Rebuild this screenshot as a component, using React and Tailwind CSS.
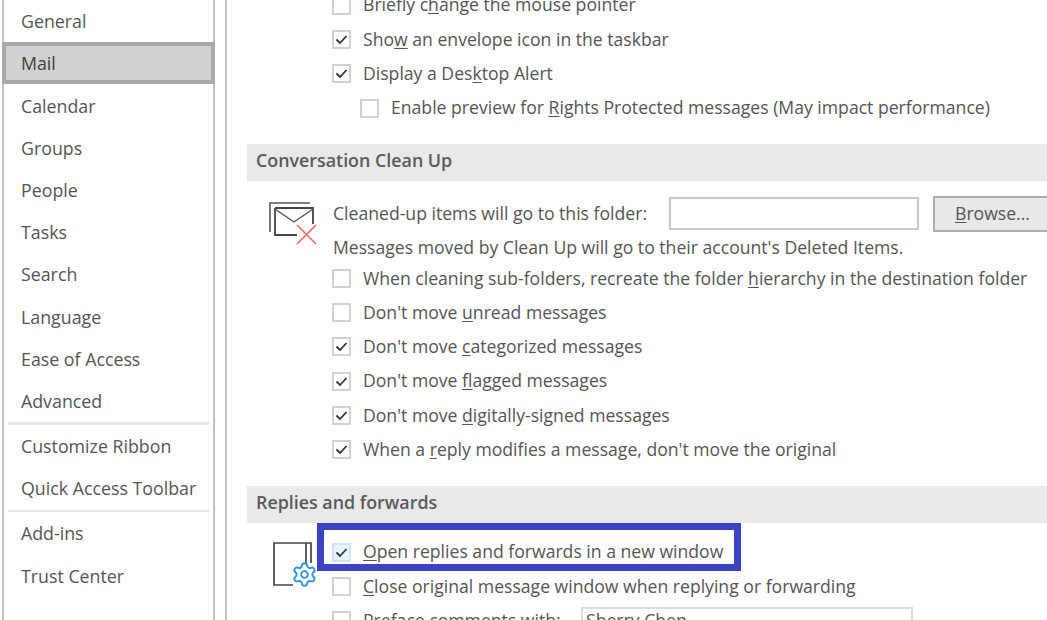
import React from "react";
import { Settings } from "lucide-react";

const font = { fontFamily: '"Open Sans", "Noto Sans", sans-serif' };

function U({ b, u, a }) {
  return (
    <span>
      {b}
      <span className="underline underline-offset-2 decoration-1">{u}</span>
      {a}
    </span>
  );
}

function Box({ checked, focus }) {
  return (
    <span
      className={`flex h-[19px] w-[19px] shrink-0 items-center justify-center border-2 ${
        focus ? "border-[#cfe3f5] bg-[#e8f3fc]" : "border-[#d2d2d2] bg-white"
      }`}
    >
      {checked && (
        <svg width="13" height="11" viewBox="0 0 13 11" fill="none">
          <path d="M1.5 5.5 L5 9 L11.5 2" stroke="#333" strokeWidth="1.8" />
        </svg>
      )}
    </span>
  );
}

function Row({ checked, children, indent = "ml-[85px]", focus }) {
  return (
    <div className={`flex h-[34.3px] items-center gap-[12px] ${indent}`}>
      <Box checked={checked} focus={focus} />
      <span className="whitespace-nowrap">{children}</span>
    </div>
  );
}

function Head({ children }) {
  return (
    <div className="flex h-[37px] items-center bg-[#e9e9e9] pb-[3px] pl-[9px] text-[17.85px] font-semibold text-[#5a5a5a]">
      {children}
    </div>
  );
}

const G1 = ["General", "Mail", "Calendar", "Groups", "People", "Tasks", "Search", "Language", "Ease of Access", "Advanced"];

function Nav({ label, active }) {
  return (
    <div
      className={`flex h-[42.2px] items-center pt-[2px] text-[17.8px] ${
        active
          ? "-mx-[2px] border-[4px] border-[#a9a9a9] bg-[#d2d1d0] pl-[15px] font-medium text-[#3f3f3f]"
          : "pl-[17px]"
      }`}
    >
      {label}
    </div>
  );
}

function CleanIcon() {
  return (
    <svg width="50" height="46" viewBox="0 0 50 46" fill="none">
      <path d="M1 30 V1 H41" stroke="#555" strokeWidth="1.6" />
      <path d="M6 6 H44 V22 M6 6 V33 H28" stroke="#444" strokeWidth="1.8" />
      <path d="M6 7 L25 20 L44 7" stroke="#555" strokeWidth="1.4" />
      <path d="M28 42 L47 23 M28 23 L47 42" stroke="#ee6a6a" strokeWidth="1.7" />
    </svg>
  );
}

function ReplyIcon() {
  return (
    <div className="relative h-[48px] w-[46px]">
      <svg width="40" height="44" viewBox="0 0 40 44" fill="none">
        <path d="M20 43 H1 V1 H38 V21 M33 1 V21" stroke="#444" strokeWidth="1.7" />
      </svg>
      <Settings className="absolute left-[18px] top-[19px]" size={27} color="#2f96dc" strokeWidth={1.7} />
    </div>
  );
}

export default function App() {
  return (
    <div
      className="relative flex h-[620px] w-[1047px] overflow-hidden bg-white text-[17.62px] leading-none text-[#555]"
      style={font}
    >
      <aside className="ml-[2px] h-[620px] w-[213px] shrink-0 border-x-2 border-[#c2c2c2]">
        {G1.map((l) => (
          <Nav key={l} label={l} active={l === "Mail"} />
        ))}
        <div className="mx-[4px] h-[3px] bg-[#e8e8e8]" />
        <Nav label="Customize Ribbon" />
        <Nav label="Quick Access Toolbar" />
        <div className="mx-[4px] mt-[1px] h-[2px] bg-[#e8e8e8]" />
        <Nav label="Add-ins" />
        <Nav label="Trust Center" />
      </aside>

      <div className="ml-[10px] h-[620px] w-[2px] shrink-0 bg-[#c2c2c2]" />

      <main className="ml-[20px] w-[800px] shrink-0 -mt-[12px]">
        <Row><U b="Briefly c" u="h" a="ange the mouse pointer" /></Row>
        <Row checked><U b="Sho" u="w" a=" an envelope icon in the taskbar" /></Row>
        <Row checked><U b="Display a Des" u="k" a="top Alert" /></Row>
        <Row indent="ml-[113px]"><U b="Enable preview for " u="R" a="ights Protected messages (May impact performance)" /></Row>

        <div className="mt-[19px]"><Head>Conversation Clean Up</Head></div>

        <div className="relative pt-[16px]">
          <div className="absolute left-[22px] top-[21px]"><CleanIcon /></div>
          <div className="ml-[86px] flex h-[33px] items-center">
            <span className="w-[336px] shrink-0 whitespace-nowrap">Cleaned-up items will go to this folder:</span>
            <div className="h-[33px] w-[250px] shrink-0 border-2 border-[#c9c9c9]" />
            <div className="ml-[14px] flex h-[36px] w-[130px] shrink-0 items-center border-2 border-[#adadad] bg-[#e8e8e8] pl-[20px]">
              <U b="" u="B" a="rowse..." />
            </div>
          </div>
          <div className="ml-[86px] mt-[6px] flex h-[24px] items-center whitespace-nowrap">
            Messages moved by Clean Up will go to their account's Deleted Items.
          </div>
        </div>
        <div className="h-[1px]" />
        <Row><span>When cleaning sub-folders, recreate the folder <U b="" u="h" a="ierarchy" /> in the destination folder</span></Row>
        <Row><U b="Don't move " u="u" a="nread messages" /></Row>
        <Row checked><U b="Don't move " u="c" a="ategorized messages" /></Row>
        <Row checked><U b="Don't move " u="f" a="lagged messages" /></Row>
        <Row checked><U b="Don't move " u="d" a="igitally-signed messages" /></Row>
        <Row checked>When a <U b="" u="r" a="eply" /> modifies a message, don't move the original</Row>

        <div className="mt-[19px]"><Head>Replies and forwards</Head></div>

        <div className="relative pt-[12px]">
          <div className="absolute left-[26px] top-[19px]"><ReplyIcon /></div>
          <Row checked focus><U b="" u="O" a="pen replies and forwards in a new window" /></Row>
          <Row><U b="" u="C" a="lose original message window when replying or forwarding" /></Row>
          <div className="ml-[85px] flex h-[34.3px] items-center gap-[12px]">
            <Box />
            <span className="w-[206px] shrink-0 whitespace-nowrap"><U b="" u="P" a="reface comments with:" /></span>
            <div className="flex h-[28px] w-[332px] shrink-0 items-center border-2 border-[#dcdcdc] pl-[3px]">Sherry Chen</div>
          </div>
        </div>
      </main>

      <div className="absolute left-[317px] top-[523px] h-[48px] w-[424px] border-[7px] border-[#3a44c4]" />
    </div>
  );
}
